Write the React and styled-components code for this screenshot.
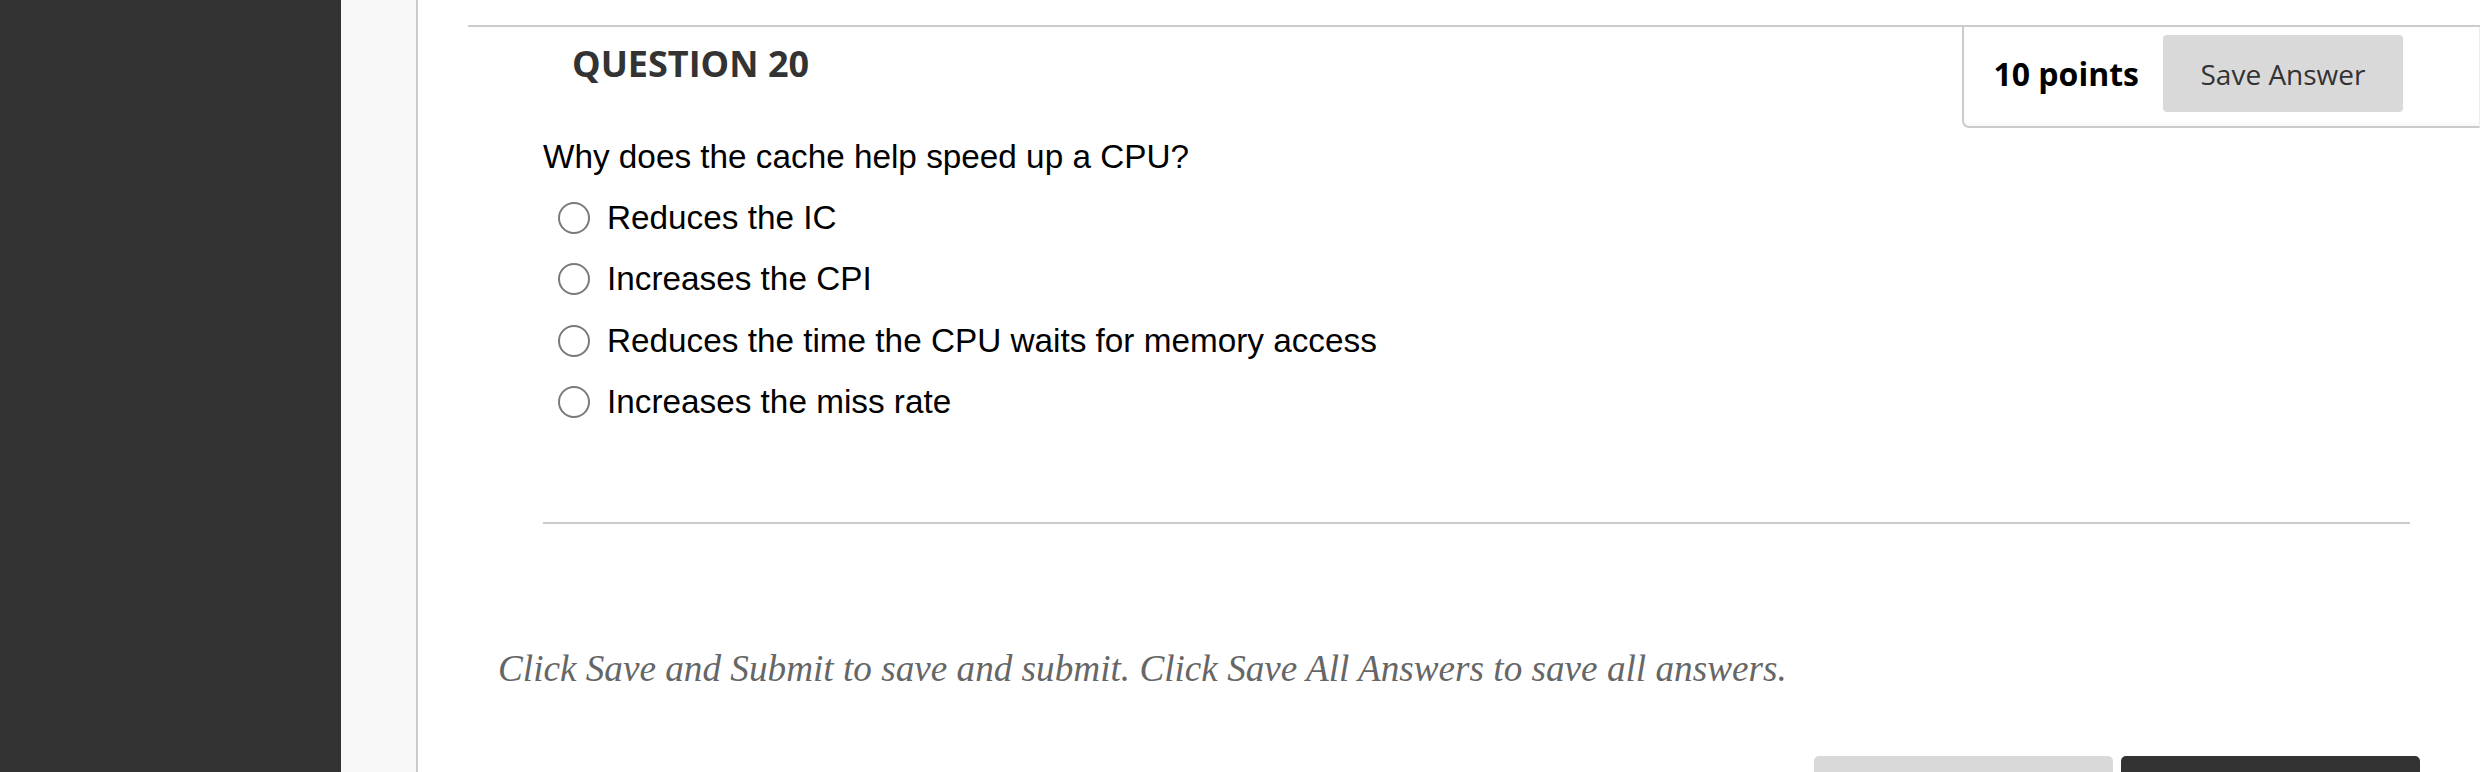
import styled, { createGlobalStyle } from "styled-components";

const GlobalStyle = createGlobalStyle`
  html, body {
    margin: 0;
    padding: 0;
    height: 772px;
    overflow: hidden;
    background: #fff;
  }
`;

const options = [
  "Reduces the IC",
  "Increases the CPI",
  "Reduces the time the CPU waits for memory access",
  "Increases the miss rate",
];

const App = () => {
  return (
    <>
      <GlobalStyle />
      <Page>
        <Sidebar />
        <Gutter />
        <Main>
          <Question>
            <Header>
              <Title>QUESTION 20</Title>
              <PointsBox>
                <Points>10 points</Points>
                <SaveButton>Save Answer</SaveButton>
              </PointsBox>
            </Header>
            <Body>
              <Prompt>Why does the cache help speed up a CPU?</Prompt>
              <Options>
                {options.map((text) => (
                  <Option key={text}>
                    <Radio type="radio" name="q20" />
                    <span>{text}</span>
                  </Option>
                ))}
              </Options>
              <Divider />
            </Body>
          </Question>
          <Footer>
            Click Save and Submit to save and submit. Click Save All Answers to
            save all answers.
          </Footer>
          {/* the bottom buttons only peek in at the lower edge */}
          <ButtonRow>
            <BottomButton aria-label="Save All Answers" />
            <BottomButton dark aria-label="Save and Submit" />
          </ButtonRow>
        </Main>
      </Page>
    </>
  );
};

const Page = styled.div`
  display: flex;
  height: 772px;
`;

const Sidebar = styled.div`
  width: 341px;
  flex-shrink: 0;
  background: #333;
`;

const Gutter = styled.div`
  width: 75px;
  flex-shrink: 0;
  background: #f8f8f8;
  border-right: 2px solid #ccc;
`;

const Main = styled.div`
  flex: 1;
  padding: 25px 6px 0 50px;
  min-width: 0;
`;

const Question = styled.div`
  border-top: 2px solid #ccc;
`;

const Header = styled.div`
  display: flex;
  justify-content: space-between;
  align-items: flex-start;
`;

const Title = styled.h2`
  margin: 19px 0 0 104px;
  font-family: "Open Sans", sans-serif;
  font-weight: 700;
  font-size: 36px;
  line-height: 36px;
  color: #333;
`;

const PointsBox = styled.div`
  display: flex;
  align-items: center;
  gap: 24px;
  padding: 8px 76px 14px 29px;
  border-left: 2px solid #ccc;
  border-bottom: 2px solid #ccc;
  border-right: 1px solid #ececec;
  border-bottom-left-radius: 7px;
  background: #fff;
  box-shadow: inset 0 -6px 8px -6px rgba(0, 0, 0, 0.06);
`;

const Points = styled.span`
  font-family: "Open Sans", sans-serif;
  font-weight: 700;
  font-size: 32px;
  color: #000;
`;

const SaveButton = styled.button`
  width: 240px;
  height: 77px;
  border: none;
  border-radius: 4px;
  background: #d9d9d9;
  color: #333;
  font-family: "Open Sans", sans-serif;
  font-size: 28px;
`;

const Body = styled.div`
  margin-top: -2px;
  padding: 0 70px 0 75px;
`;

const Prompt = styled.p`
  margin: 0;
  font-family: "Liberation Sans", Arial, sans-serif;
  font-size: 33.3px;
  line-height: 61.3px;
  color: #000;
`;

const Options = styled.div`
  padding-left: 15px;
`;

const Option = styled.label`
  display: flex;
  align-items: center;
  gap: 17px;
  height: 61.3px;
  font-family: "Liberation Sans", Arial, sans-serif;
  font-size: 33.3px;
  color: #000;
`;

const Radio = styled.input`
  appearance: none;
  margin: 0;
  width: 32px;
  height: 32px;
  border: 2.5px solid #7a7a7a;
  border-radius: 50%;
  background: #fff;
  flex-shrink: 0;
`;

const Divider = styled.hr`
  margin: 90px 0 0;
  border: none;
  height: 2px;
  background: #ccc;
`;

const Footer = styled.p`
  margin: 123px 0 0 30px;
  font-family: "Liberation Serif", "Times New Roman", serif;
  font-style: italic;
  font-size: 37.2px;
  color: #666;
`;

const ButtonRow = styled.div`
  display: flex;
  justify-content: flex-end;
  gap: 8px;
  margin-top: 66px;
  padding-right: 60px;
`;

const BottomButton = styled.button`
  width: 299px;
  height: 77px;
  border: none;
  border-radius: 5px;
  background: ${(p) => (p.dark ? "#333" : "#d9d9d9")};
`;

export default App;
